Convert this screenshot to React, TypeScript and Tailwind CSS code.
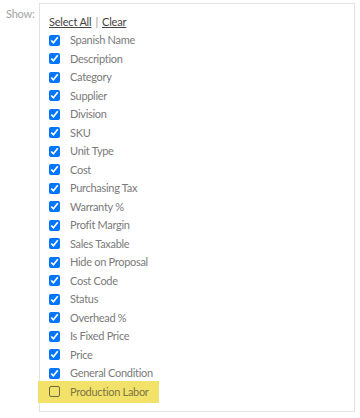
import React from 'react';

const columns: { label: string; checked: boolean }[] = [
  { label: 'Spanish Name', checked: true },
  { label: 'Description', checked: true },
  { label: 'Category', checked: true },
  { label: 'Supplier', checked: true },
  { label: 'Division', checked: true },
  { label: 'SKU', checked: true },
  { label: 'Unit Type', checked: true },
  { label: 'Cost', checked: true },
  { label: 'Purchasing Tax', checked: true },
  { label: 'Warranty %', checked: true },
  { label: 'Profit Margin', checked: true },
  { label: 'Sales Taxable', checked: true },
  { label: 'Hide on Proposal', checked: true },
  { label: 'Cost Code', checked: true },
  { label: 'Status', checked: true },
  { label: 'Overhead %', checked: true },
  { label: 'Is Fixed Price', checked: true },
  { label: 'Price', checked: true },
  { label: 'General Condition', checked: true },
  { label: 'Production Labor', checked: false },
];

export default function App() {
  return (
    <div
      className="w-[360px] h-[418px] bg-white flex items-start pt-[3px]"
      style={{ fontFamily: 'Lato, "Liberation Sans", sans-serif' }}
    >
      <div className="w-[39px] pl-[6px] pt-[3px] text-[#a3a3a3] text-[11px] tracking-[-0.2px]">Show:</div>
      <div className="w-[316px] h-[409px] border border-[#e2e2e2] pt-[9px]">
        <div className="pl-[9px] h-[18px] flex items-center text-[#444] text-[11px] tracking-[-0.2px]">
          <a className="underline cursor-pointer">Select All</a>
          <span className="mx-[4px] text-[#999]">|</span>
          <a className="underline cursor-pointer">Clear</a>
        </div>
        <div className="flex flex-col">
          {columns.map((c) =>
            c.checked ? (
              <label
                key={c.label}
                className="h-[18.5px] flex items-center pl-[9px] text-[#7a7a7a] text-[11px] tracking-[-0.3px] whitespace-nowrap"
              >
                <input
                  type="checkbox"
                  defaultChecked
                  className="m-0 w-[11px] h-[11px] accent-[#0075ff]"
                />
                <span className="ml-[10px]">{c.label}</span>
              </label>
            ) : (
              <label
                key={c.label}
                className="h-[22px] -my-[1.75px] -ml-[2px] w-[121px] flex items-center pl-[11px] bg-[#f3e26a] text-[#7d7546] text-[11px] tracking-[-0.3px] whitespace-nowrap"
              >
                <input
                  type="checkbox"
                  className="m-0 w-[11px] h-[11px] appearance-none border border-[#6f6a45] rounded-[2px] bg-transparent"
                />
                <span className="ml-[10px]">{c.label}</span>
              </label>
            )
          )}
        </div>
      </div>
    </div>
  );
}
